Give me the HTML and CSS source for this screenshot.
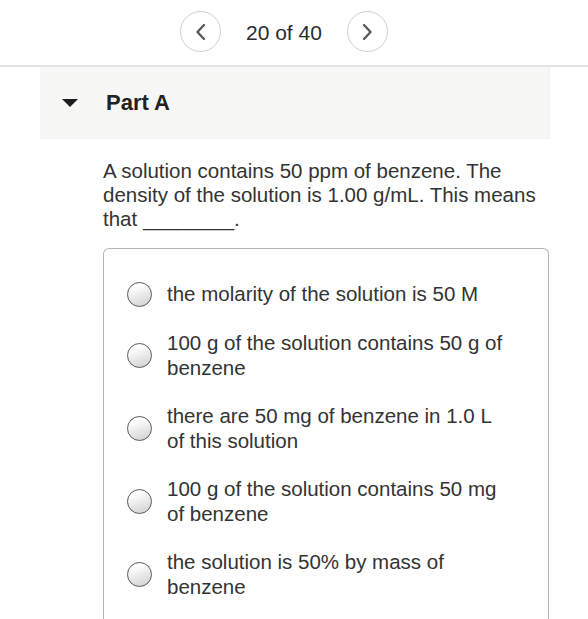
FILE: index.html
```html
<!DOCTYPE html>
<html>
<head>
<meta charset="utf-8">
<link rel="stylesheet" href="styles.css">
</head>
<body>
<nav class="pager">
  <button class="nav-btn" aria-label="Previous">
    <svg width="14" height="20" viewBox="0 0 14 20"><path d="M10 3 L3.5 10 L10 17" fill="none" stroke="#555" stroke-width="2.2" stroke-linecap="round" stroke-linejoin="round"/></svg>
  </button>
  <span class="count">20 of 40</span>
  <button class="nav-btn" aria-label="Next">
    <svg width="14" height="20" viewBox="0 0 14 20"><path d="M4 3 L10.5 10 L4 17" fill="none" stroke="#555" stroke-width="2.2" stroke-linecap="round" stroke-linejoin="round"/></svg>
  </button>
</nav>
<div class="rule"></div>
<section class="part">
  <div class="part-head">
    <span class="caret"></span>
    <h2 class="part-title">Part A</h2>
  </div>
  <div class="part-body">
    <p class="question">A solution contains 50 ppm of benzene. The density of the solution is 1.00 g/mL. This means that ________.</p>
    <div class="choices">
      <label class="choice"><span class="radio"></span><span class="choice-text">the molarity of the solution is 50 M</span></label>
      <label class="choice"><span class="radio"></span><span class="choice-text">100 g of the solution contains 50 g of benzene</span></label>
      <label class="choice"><span class="radio"></span><span class="choice-text">there are 50 mg of benzene in 1.0 L of this solution</span></label>
      <label class="choice"><span class="radio"></span><span class="choice-text">100 g of the solution contains 50 mg of benzene</span></label>
      <label class="choice"><span class="radio"></span><span class="choice-text">the solution is 50% by mass of benzene</span></label>
    </div>
  </div>
</section>
</body>
</html>
```
FILE: styles.css
```css
* { box-sizing: border-box; }
html, body { margin: 0; padding: 0; background: #fff; }
body {
  font-family: "Liberation Sans", Arial, sans-serif;
  color: #2e2e2e;
  width: 588px;
  height: 619px;
  overflow: hidden;
}
.pager {
  display: flex;
  align-items: center;
  height: 65px;
  padding-left: 180px;
}
.nav-btn {
  width: 41px;
  height: 41px;
  border-radius: 50%;
  border: 1.5px solid #cfcfcf;
  background: #fff;
  display: flex;
  align-items: center;
  justify-content: center;
  padding: 0;
  margin-top: -2px;
}
.count {
  font-size: 21px;
  margin: 0 25px 0 25px;
  color: #2b2b2b;
}
.rule {
  height: 2px;
  background: #e3e3e3;
}
.part {
  margin: 0;
}
.part-head {
  margin: 0 38px 0 40px;
  height: 72px;
  background: #f7f7f6;
  border-right: 1px solid #f1f1f0;
  border-bottom: 1px solid #f1f1f0;
  display: flex;
  align-items: center;
  padding-left: 22px;
}
.caret {
  width: 0;
  height: 0;
  border-left: 8px solid transparent;
  border-right: 8px solid transparent;
  border-top: 8px solid #1e1e1e;
  margin-right: 28px;
  margin-top: 1px;
}
.part-title {
  margin: 0;
  font-size: 22px;
  font-weight: bold;
  color: #222;
}
.part-body {
  padding: 20px 39px 0 103px;
}
.question {
  margin: 0;
  font-size: 20.5px;
  line-height: 24px;
  color: #333;
}
.choices {
  margin-top: 17px;
  border: 1.5px solid #b4b4b4;
  border-bottom: none;
  border-radius: 6px 6px 0 0;
  padding: 33px 20px 40px 23px;
  display: flex;
  flex-direction: column;
  gap: 24px;
}
.choice {
  display: flex;
  align-items: center;
  font-size: 20.5px;
  line-height: 24.5px;
  color: #333;
}
.radio {
  flex: none;
  width: 25px;
  height: 25px;
  border-radius: 50%;
  border: 1.8px solid #5a5a5a;
  background: linear-gradient(160deg, #ffffff 20%, #e6e6e6 60%, #cfcfcf 100%);
  margin-right: 15px;
}
.choice-text { max-width: 342px; }
```
